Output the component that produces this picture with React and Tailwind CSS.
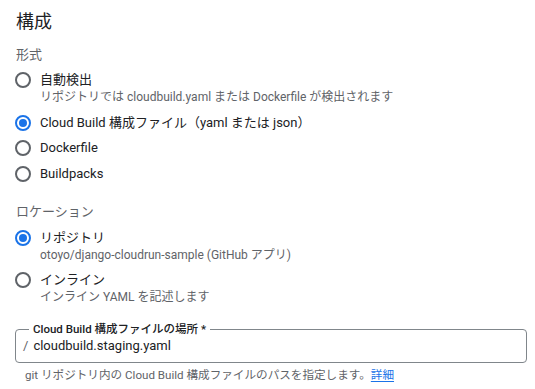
function Radio({ checked }) {
  return checked ? (
    <span className="-ml-px flex h-[16px] w-[16px] shrink-0 items-center justify-center rounded-full border-2 border-[#1a73e8]">
      <span className="h-[8px] w-[8px] rounded-full bg-[#1a73e8]" />
    </span>
  ) : (
    <span className="-ml-px h-[16px] w-[16px] shrink-0 rounded-full border-2 border-[#5f6368]" />
  );
}

function Option({ checked, label, sub, className }) {
  return (
    <div className={className}>
      <div className="flex items-center gap-[9px] h-[18px]">
        <Radio checked={checked} />
        <span className="text-[13px] leading-[18px] text-[#202124]">{label}</span>
      </div>
      {sub && (
        <div className="pl-[24px] text-[12px] leading-[16px] text-[#5f6368]">{sub}</div>
      )}
    </div>
  );
}

export default function App() {
  return (
    <div className="w-[535px] h-[389px] overflow-hidden bg-white font-['Roboto','Noto_Sans_CJK_JP',sans-serif]">
      <div className="pl-[16px] pt-[11px]">
        <h2 className="text-[18px] leading-[22px] text-[#202124]">構成</h2>

        <div className="mt-[13px] text-[13px] leading-[18px] text-[#5f6368]">形式</div>

        <Option className="mt-[7px]" label="自動検出" sub="リポジトリでは cloudbuild.yaml または Dockerfile が検出されます" />
        <Option className="mt-[9px]" checked label="Cloud Build 構成ファイル（yaml または json）" />
        <Option className="mt-[7px]" label="Dockerfile" />
        <Option className="mt-[8px]" label="Buildpacks" />

        <div className="mt-[20px] text-[13px] leading-[18px] text-[#5f6368]">ロケーション</div>

        <Option className="mt-[8px]" checked label="リポジトリ" sub="otoyo/django-cloudrun-sample (GitHub アプリ)" />
        <Option className="mt-[8px]" label="インライン" sub="インライン YAML を記述します" />
      </div>

      <div className="relative ml-[15px] mt-[24px] w-[512px] h-[34px] rounded-[4px] border border-[#80868b] flex items-center pl-[7px]">
        <span className="absolute left-[13px] top-[-9px] bg-white px-[4px] text-[11.5px] leading-[16px] font-medium text-[#202124]">
          Cloud Build 構成ファイルの場所 *
        </span>
        <span className="text-[13px] text-[#5f6368]">/</span>
        <span className="ml-[5px] text-[13px] text-[#202124]">cloudbuild.staging.yaml</span>
      </div>

      <div className="ml-[25px] mt-[4px] text-[11.6px] leading-[16px] text-[#5f6368]">
        git リポジトリ内の Cloud Build 構成ファイルのパスを指定します。
        <a className="text-[#1a73e8] underline underline-offset-2">詳細</a>
      </div>
    </div>
  );
}
